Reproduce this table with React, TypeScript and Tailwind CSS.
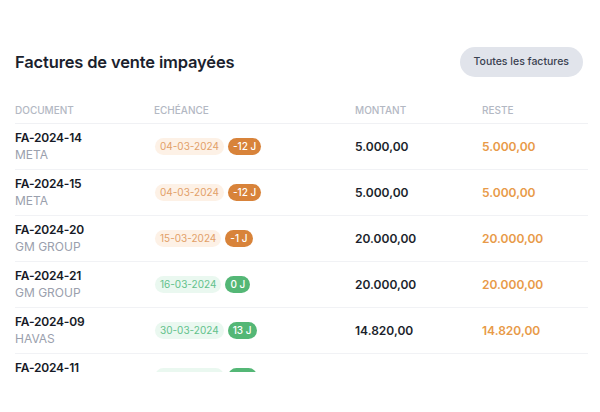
const rows = [
  { doc: "FA-2024-14", client: "META", date: "04-03-2024", days: "-12 J", late: true, montant: "5.000,00", reste: "5.000,00" },
  { doc: "FA-2024-15", client: "META", date: "04-03-2024", days: "-12 J", late: true, montant: "5.000,00", reste: "5.000,00" },
  { doc: "FA-2024-20", client: "GM GROUP", date: "15-03-2024", days: "-1 J", late: true, montant: "20.000,00", reste: "20.000,00" },
  { doc: "FA-2024-21", client: "GM GROUP", date: "16-03-2024", days: "0 J", late: false, montant: "20.000,00", reste: "20.000,00" },
  { doc: "FA-2024-09", client: "HAVAS", date: "30-03-2024", days: "13 J", late: false, montant: "14.820,00", reste: "14.820,00" },
  { doc: "FA-2024-11", client: "HAVAS", date: "05-04-2024", days: "19 J", late: false, montant: "8.400,00", reste: "8.400,00" },
];

export default function App() {
  return (
    <div className="w-[600px] h-[412px] bg-white px-[15px] pt-[47px] font-['Inter',sans-serif] overflow-hidden">
      <div className="flex items-center justify-between pr-[2px]">
        <h1 className="text-[16.5px] font-semibold text-[#1b1f2e] tracking-[-0.15px]">Factures de vente impayées</h1>
        <button className="h-[30px] px-[14px] rounded-full bg-[#e1e4eb] text-[10.5px] font-medium text-[#3a4150]">
          Toutes les factures
        </button>
      </div>

      <div className="mt-[20px] h-[275px] w-[573px] overflow-hidden">
        <div className="flex h-[27px] items-center border-b border-[#f0f1f4] text-[10px] font-medium uppercase text-[#b3b8c3]">
          <div className="w-[139px]">Document</div>
          <div className="w-[201px]">Echéance</div>
          <div className="w-[127px]">Montant</div>
          <div className="flex-1">Reste</div>
        </div>
        {rows.map((r) => (
          <div key={r.doc} className="flex h-[46px] items-center border-b border-[#f1f2f5]">
            <div className="w-[139px]">
              <div className="text-[12px] leading-[17px] font-semibold tracking-[-0.2px] text-[#161a26]">{r.doc}</div>
              <div className="text-[12px] leading-[18px] text-[#9aa0ad]">{r.client}</div>
            </div>
            <div className="w-[201px] flex items-center gap-[4px] pl-[1px]">
              <span
                className={
                  r.late
                    ? "h-[17px] px-[5px] rounded-full bg-[#fdf1e6] text-[10px] leading-[17px] text-[#e2a068]"
                    : "h-[17px] px-[5px] rounded-full bg-[#eaf8f0] text-[10px] leading-[17px] text-[#62c18b]"
                }
              >
                {r.date}
              </span>
              <span
                className={
                  r.late
                    ? "h-[17px] px-[5px] rounded-full bg-[#d8833a] text-[10px] leading-[17px] font-medium text-white"
                    : "h-[17px] px-[5px] rounded-full bg-[#54b776] text-[10px] leading-[17px] font-medium text-white"
                }
              >
                {r.days}
              </span>
            </div>
            <div className="w-[127px] text-[12px] font-semibold text-[#1b1f2c]">{r.montant}</div>
            <div className="flex-1 text-[12px] font-semibold text-[#e89a48]">{r.reste}</div>
          </div>
        ))}
      </div>
    </div>
  );
}
